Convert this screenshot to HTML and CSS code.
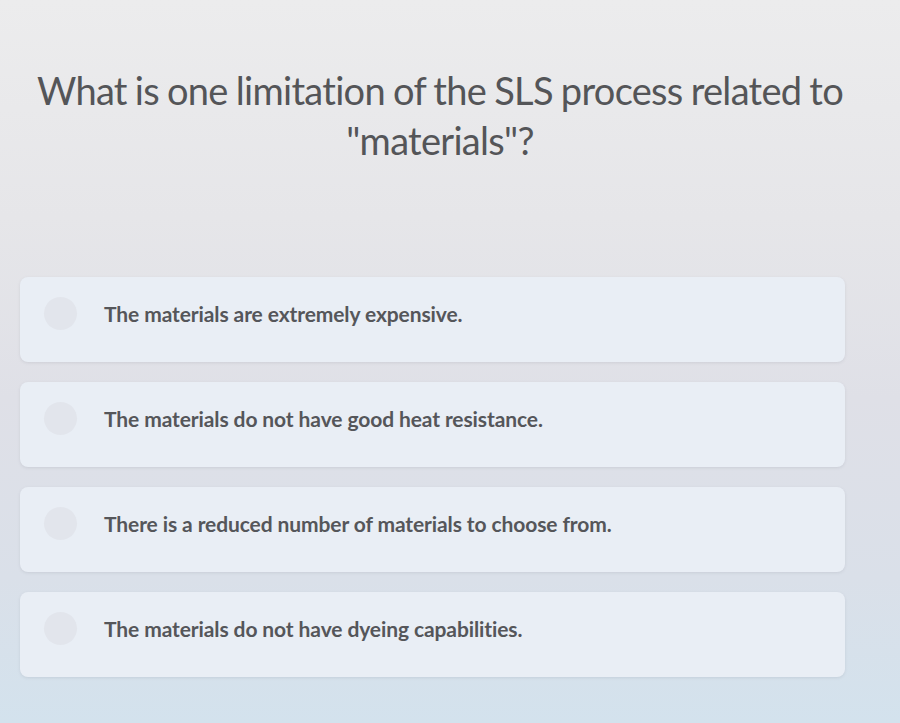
FILE: index.html
```html
<!DOCTYPE html>
<html lang="en">
<head>
<meta charset="utf-8">
<title>Quiz question</title>
<link rel="stylesheet" href="styles.css">
</head>
<body>
<main class="quiz">
  <h1 class="question">What is one limitation of the SLS process related to "materials"?</h1>
  <ul class="options">
    <li class="option"><span class="radio"></span><span class="label">The materials are extremely expensive.</span></li>
    <li class="option"><span class="radio"></span><span class="label">The materials do not have good heat resistance.</span></li>
    <li class="option"><span class="radio"></span><span class="label">There is a reduced number of materials to choose from.</span></li>
    <li class="option"><span class="radio"></span><span class="label">The materials do not have dyeing capabilities.</span></li>
  </ul>
</main>
</body>
</html>
```
FILE: styles.css
```css
html, body {
  margin: 0;
  padding: 0;
  height: 100%;
}
body {
  background: linear-gradient(180deg, #ececed 0%, #e6e6e9 30%, #dfe0e7 55%, #dae0e9 80%, #d3e2ed 100%);
  font-family: Lato, "Open Sans", sans-serif;
  overflow: hidden;
}
.quiz {
  padding: 65px 40px 0 20px;
}
.question {
  margin: 0;
  padding: 0;
  font-size: 38px;
  font-weight: 400;
  line-height: 50px;
  letter-spacing: -0.7px;
  word-spacing: -1px;
  color: #545558;
  text-align: center;
}
.options {
  list-style: none;
  margin: 112px 15px 0 0;
  padding: 0;
  display: flex;
  flex-direction: column;
  gap: 20px;
}
.option {
  height: 85px;
  box-sizing: border-box;
  display: flex;
  align-items: center;
  background: #e9eef5;
  border-radius: 8px;
  box-shadow: 0 1px 3px rgba(120, 125, 140, 0.18);
  padding: 0 0 12px 24px;
}
.radio {
  width: 33px;
  height: 33px;
  border-radius: 50%;
  background: #e2e5ec;
  flex: none;
}
.label {
  margin-left: 27px;
  font-size: 21px;
  font-weight: 700;
  color: #55565a;
  letter-spacing: -0.1px;
}
```
